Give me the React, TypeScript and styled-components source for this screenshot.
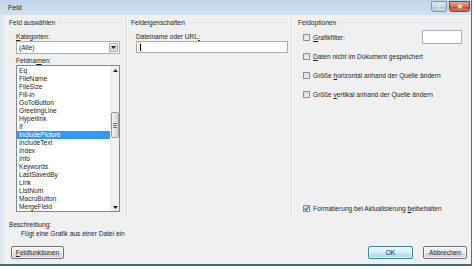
import React from 'react';
import styled, { createGlobalStyle } from 'styled-components';

const GlobalStyle = createGlobalStyle`
  html, body {
    margin: 0;
    padding: 0;
    background: #ffffff;
  }
  #root {
    width: 474px;
    height: 269px;
    overflow: hidden;
  }
`;

const fieldNames = [
  'Eq', 'FileName', 'FileSize', 'Fill-in', 'GoToButton', 'GreetingLine',
  'Hyperlink', 'If', 'IncludePicture', 'IncludeText', 'Index', 'Info',
  'Keywords', 'LastSavedBy', 'Link', 'ListNum', 'MacroButton', 'MergeField',
];

const Window = styled.div`
  width: 472px;
  height: 266px;
  box-sizing: border-box;
  display: flex;
  flex-direction: column;
  background: #dfe8f2;
  border-right: 1px solid #56707d;
  border-bottom: 2px solid #3d6b7b;
  font-family: 'Liberation Sans', Arial, sans-serif;
  font-size: 6.6px;
  color: #1e1e1e;
`;

// Title bar with the two caption buttons
const TitleBar = styled.div`
  height: 15px;
  flex-shrink: 0;
  display: flex;
  align-items: flex-start;
  justify-content: space-between;
  padding: 0 1px 0 8px;
  background: linear-gradient(#bed4ea, #d3e2f1);
`;

const Title = styled.span`
  font-size: 7px;
  line-height: 15px;
  color: #1b1b1b;
`;

const Caption = styled.div`
  display: flex;
  gap: 2px;
  margin-top: 1px;
`;

const CaptionButton = styled.div<{ $close?: boolean }>`
  width: ${p => (p.$close ? 21 : 16)}px;
  height: 11px;
  box-sizing: border-box;
  display: flex;
  align-items: center;
  justify-content: center;
  border: 1px solid ${p => (p.$close ? '#8b3b30' : '#7d95b1')};
  border-radius: 0 0 3px 3px;
  background: ${p => (p.$close
    ? 'linear-gradient(#e6a99c, #d0705e 50%, #c4462f 51%, #d57a60)'
    : 'linear-gradient(#dde8f4, #c5d6e9 50%, #b1c7de 51%, #c8d9ea)')};
  color: ${p => (p.$close ? '#ffffff' : '#eef4fa')};
  font-size: 7px;
  font-weight: bold;
  line-height: 1;
`;

const Body = styled.div`
  flex: 1;
  margin-left: 4px;
  display: flex;
  flex-direction: column;
  padding: 3px 4px 0 5px;
  background: #f0f0f0;
`;

const Columns = styled.div`
  height: 200px;
  display: grid;
  grid-template-columns: 117px 165px 1fr;
`;

const Column = styled.div<{ $divider?: boolean; $pad: number }>`
  display: flex;
  flex-direction: column;
  padding-left: ${p => p.$pad}px;
  border-left: ${p => (p.$divider ? '1px solid #dadada' : 'none')};
  box-shadow: ${p => (p.$divider ? 'inset 1px 0 0 #ffffff' : 'none')};
  min-width: 0;
`;

const GroupHeader = styled.div`
  height: 9px;
  display: flex;
  align-items: center;
  gap: 3px;
  padding-right: 3px;
  white-space: nowrap;

  &::after {
    content: '';
    flex: 1;
    height: 1px;
    background: #dde3e8;
  }
`;

const Field = styled.div<{ $indent: number }>`
  display: flex;
  flex-direction: column;
  padding-left: ${p => p.$indent}px;
`;

const Label = styled.div<{ $top: number }>`
  height: 8px;
  line-height: 8px;
  margin-top: ${p => p.$top}px;
  white-space: nowrap;
`;

const Combo = styled.div`
  width: 104px;
  height: 13px;
  box-sizing: border-box;
  display: flex;
  align-items: center;
  justify-content: space-between;
  padding: 0 1px 0 2px;
  background: #ffffff;
  border: 1px solid #abadb3;
`;

const DropButton = styled.div`
  width: 9px;
  height: 9px;
  box-sizing: border-box;
  display: flex;
  align-items: center;
  justify-content: center;
  border: 1px solid #a5a5a5;
  border-radius: 1px;
  background: linear-gradient(#f4f4f4, #e0e0e0 50%, #d2d2d2 51%, #e4e4e4);
`;

const ListBox = styled.div`
  width: 104px;
  height: 147px;
  box-sizing: border-box;
  display: flex;
  background: #ffffff;
  border: 1px solid #828790;
`;

const Items = styled.div`
  flex: 1;
  padding-top: 1px;
  min-width: 0;
`;

const Item = styled.div<{ $selected?: boolean }>`
  height: 8px;
  line-height: 8px;
  padding-left: 2px;
  white-space: nowrap;
  background: ${p => (p.$selected ? '#3399ff' : 'transparent')};
  color: ${p => (p.$selected ? '#ffffff' : '#1e1e1e')};
`;

const ScrollBar = styled.div`
  width: 8px;
  display: flex;
  flex-direction: column;
  background: #f1f1f1;
  border-left: 1px solid #ececec;
`;

const Arrow = styled.div`
  height: 8px;
  display: flex;
  align-items: center;
  justify-content: center;
`;

const Thumb = styled.div<{ $offset: number }>`
  height: 26px;
  margin: ${p => p.$offset}px 0 auto 0;
  box-sizing: border-box;
  display: flex;
  flex-direction: column;
  align-items: center;
  justify-content: center;
  gap: 1px;
  border: 1px solid #989898;
  border-radius: 2px;
  background: linear-gradient(90deg, #f2f2f2, #e2e2e2 50%, #d4d4d4);

  span {
    width: 4px;
    height: 1px;
    background: #6f6f6f;
  }
`;

const TextInput = styled.div<{ $width: number; $height: number }>`
  width: ${p => p.$width}px;
  height: ${p => p.$height}px;
  box-sizing: border-box;
  display: flex;
  align-items: center;
  padding-left: 3px;
  background: #ffffff;
  border: 1px solid #abadb3;
`;

const Caret = styled.span`
  width: 1px;
  height: 7px;
  background: #000000;
`;

const Options = styled.div`
  flex: 1;
  display: flex;
  flex-direction: column;
  gap: 5px;
  padding: 3px 5px 3px 5px;
`;

const OptionRow = styled.div<{ $bottom?: boolean }>`
  height: 14px;
  display: flex;
  align-items: center;
  gap: 3px;
  margin-top: ${p => (p.$bottom ? 'auto' : '0')};
  white-space: nowrap;
`;

const Box = styled.div`
  width: 7px;
  height: 7px;
  box-sizing: border-box;
  flex-shrink: 0;
  display: flex;
  align-items: center;
  justify-content: center;
  border: 1px solid #8e8f8f;
  background: linear-gradient(135deg, #d8d8d8, #f6f6f6);
`;

const Spacer = styled.div`
  flex: 1;
`;

const Description = styled.div`
  display: flex;
  flex-direction: column;
  margin-top: 3px;
`;

const DescText = styled.div`
  height: 9px;
  line-height: 9px;
  padding-left: 12px;
`;

const ButtonRow = styled.div`
  display: flex;
  align-items: center;
  gap: 10px;
  margin-top: 8px;
  padding-left: 2px;
`;

const Button = styled.div<{ $width: number; $default?: boolean }>`
  width: ${p => p.$width}px;
  height: 13px;
  box-sizing: border-box;
  display: flex;
  align-items: center;
  justify-content: center;
  border: 1px solid ${p => (p.$default ? '#3c7fb1' : '#707070')};
  border-radius: 2px;
  background: ${p => (p.$default
    ? 'linear-gradient(#eaf6fd, #d9f0fc 50%, #bee6fd 51%, #a7d9f5)'
    : 'linear-gradient(#f2f2f2, #ebebeb 50%, #dddddd 51%, #cfcfcf)')};
  box-shadow: inset 0 0 0 1px rgba(255, 255, 255, 0.7);
  white-space: nowrap;
`;

const Triangle: React.FC<{ up?: boolean }> = ({ up }) => (
  <svg width="5" height="3" viewBox="0 0 5 3">
    <path d={up ? 'M0 3 L2.5 0 L5 3 Z' : 'M0 0 L5 0 L2.5 3 Z'} fill="#1e1e1e" />
  </svg>
);

const Check = () => (
  <svg width="5" height="5" viewBox="0 0 5 5">
    <path d="M0.5 2.6 L2 4.2 L4.6 0.6" fill="none" stroke="#3a4f8a" strokeWidth="1.1" />
  </svg>
);

const Option: React.FC<{ checked?: boolean; bottom?: boolean; children: React.ReactNode }> = ({ checked, bottom, children }) => (
  <OptionRow $bottom={bottom}>
    <Box>{checked && <Check />}</Box>
    <span>{children}</span>
  </OptionRow>
);

const App: React.FC = () => {
  const selected = 'IncludePicture';

  return (
    <>
      <GlobalStyle />
      <Window>
        <TitleBar>
          <Title>Feld</Title>
          <Caption>
            <CaptionButton>?</CaptionButton>
            <CaptionButton $close>✕</CaptionButton>
          </Caption>
        </TitleBar>

        <Body>
          <Columns>
            <Column $pad={0}>
              <GroupHeader>Feld auswählen</GroupHeader>
              <Field $indent={7}>
                <Label $top={6}><u>K</u>ategorien:</Label>
                <Combo>
                  <span>(Alle)</span>
                  <DropButton><Triangle /></DropButton>
                </Combo>
                <Label $top={3}>Feldna<u>m</u>en:</Label>
                <ListBox>
                  <Items>
                    {fieldNames.map(name => (
                      <Item key={name} $selected={name === selected}>{name}</Item>
                    ))}
                  </Items>
                  <ScrollBar>
                    <Arrow><Triangle up /></Arrow>
                    <Thumb $offset={38}>
                      <span />
                      <span />
                      <span />
                    </Thumb>
                    <Arrow><Triangle /></Arrow>
                  </ScrollBar>
                </ListBox>
              </Field>
            </Column>

            <Column $divider $pad={4}>
              <GroupHeader>Feldeigenschaften</GroupHeader>
              <Field $indent={5}>
                <Label $top={6}>Dateiname oder URL<u>:</u></Label>
                <TextInput $width={152} $height={12}>
                  <Caret />
                </TextInput>
              </Field>
            </Column>

            <Column $divider $pad={6}>
              <GroupHeader>Feldoptionen</GroupHeader>
              <Options>
                <OptionRow>
                  <Box />
                  <span><u>G</u>rafikfilter:</span>
                  <Spacer />
                  <TextInput $width={40} $height={14} />
                </OptionRow>
                <Option><u>D</u>aten nicht im Dokument gespeichert</Option>
                <Option>Größe <u>h</u>orizontal anhand der Quelle ändern</Option>
                <Option>Größe <u>v</u>ertikal anhand der Quelle ändern</Option>
                <Option checked bottom>Formatierung bei Aktualisierung <u>b</u>eibehalten</Option>
              </Options>
            </Column>
          </Columns>

          <Description>
            <Label $top={0}>Beschreibung:</Label>
            <DescText>Fügt eine Grafik aus einer Datei ein</DescText>
          </Description>

          <ButtonRow>
            <Button $width={53}><u>F</u>eldfunktionen</Button>
            <Spacer />
            <Button $width={45} $default>OK</Button>
            <Button $width={44}>Abbrechen</Button>
          </ButtonRow>
        </Body>
      </Window>
    </>
  );
};

export default App;
